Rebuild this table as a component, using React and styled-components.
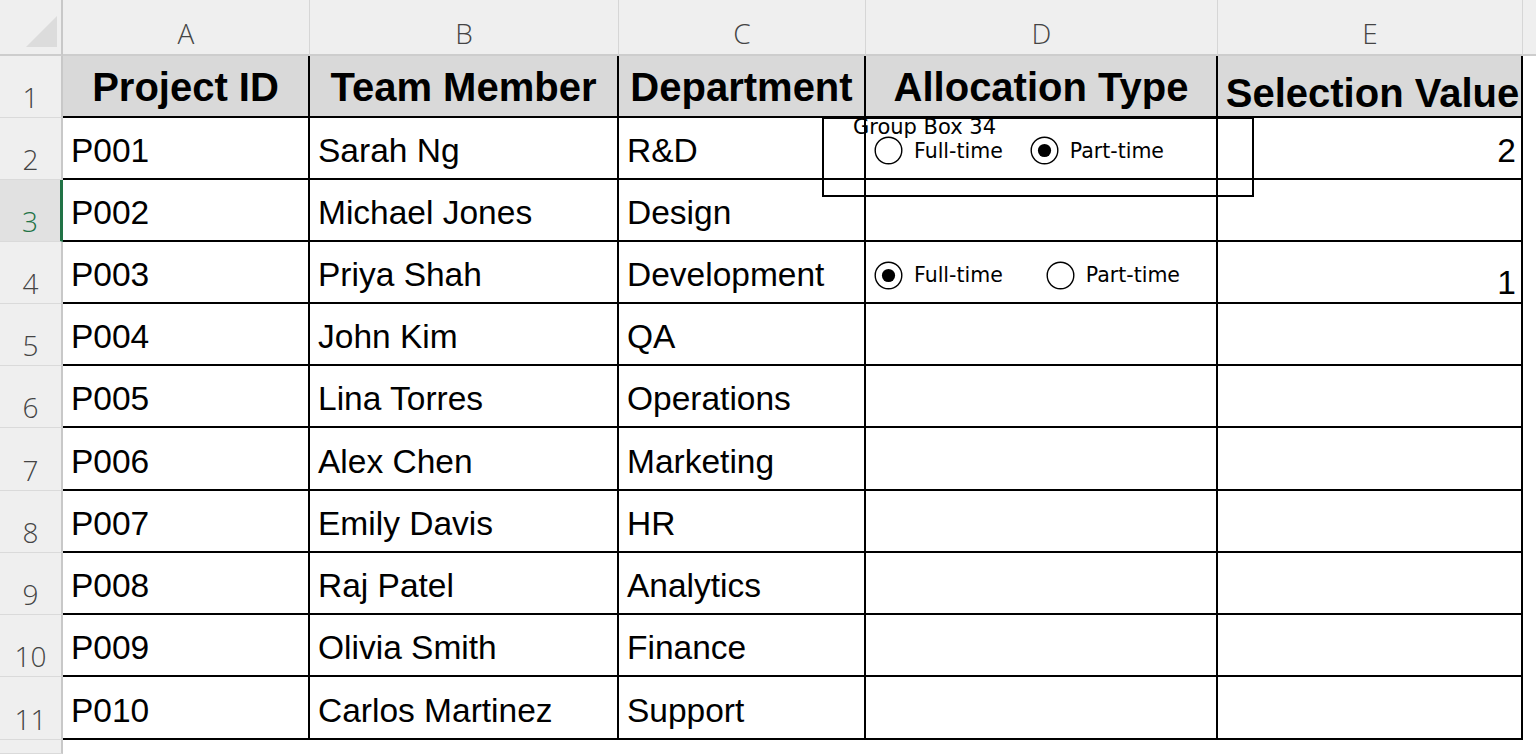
import React, { Fragment } from "react";
import styled, { createGlobalStyle } from "styled-components";

const GlobalStyle = createGlobalStyle`
  html, body { margin: 0; padding: 0; background: #fff; overflow: hidden; }
  #root { width: 1536px; height: 754px; }
`;

const Sheet = styled.div`
  position: relative;
  display: grid;
  grid-template-columns: 63px 247px 309px 247px 352px 305px 1fr;
  grid-template-rows: 56px repeat(6, 62px) 63px repeat(3, 62px) 63px 1fr;
  width: 1536px;
  height: 754px;
  font-family: "Liberation Sans", Arial, sans-serif;
  color: #000;
`;

const Corner = styled.div`
  box-sizing: border-box;
  background: #efefef;
  border-right: 2px solid #c8c8c8;
  border-bottom: 2px solid #cdcdcd;
  display: flex;
  justify-content: flex-end;
  align-items: flex-end;
  padding: 0 4px 7px 0;
`;

const ColHead = styled.div`
  box-sizing: border-box;
  background: #efefef;
  border-bottom: 2px solid #cdcdcd;
  border-right: ${(p) => (p.$blank ? "none" : "1px solid #d6d6d6")};
  display: flex;
  justify-content: center;
  align-items: flex-end;
  padding-bottom: 2px;
  font-family: "Open Sans", "DejaVu Sans", sans-serif;
  font-weight: 300;
  font-size: 28px;
  color: #444;
`;

const RowHead = styled.div`
  box-sizing: border-box;
  background: ${(p) => (p.$selected ? "#e1e1e1" : "#efefef")};
  border-right: ${(p) => (p.$selected ? "3px solid #217346" : "2px solid #c8c8c8")};
  border-bottom: 1px solid #dadada;
  display: flex;
  justify-content: center;
  align-items: flex-end;
  padding-bottom: 1px;
  font-family: "Open Sans", "DejaVu Sans", sans-serif;
  font-weight: 300;
  font-size: 28px;
  color: ${(p) => (p.$selected ? "#217346" : "#444")};
`;

const HeadCell = styled.div`
  box-sizing: border-box;
  background: #d9d9d9;
  border-right: 2px solid #000;
  border-bottom: 2px solid #000;
  display: flex;
  justify-content: center;
  align-items: flex-end;
  padding-bottom: ${(p) => (p.$low ? "0px" : "6px")};
  padding-left: ${(p) => (p.$low ? "6px" : "0px")};
  font-weight: 700;
  font-size: 40px;
  white-space: nowrap;
  overflow: hidden;
`;

const Cell = styled.div`
  box-sizing: border-box;
  border-right: 2px solid #000;
  border-bottom: 2px solid #000;
  display: flex;
  justify-content: ${(p) => (p.$align === "right" ? "flex-end" : "flex-start")};
  align-items: flex-end;
  padding: 0 5px ${(p) => (p.$low ? "0px" : "8px")} 8px;
  font-size: 33.5px;
  white-space: nowrap;
`;

const ControlCell = styled.div`
  box-sizing: border-box;
  border-right: 2px solid #000;
  border-bottom: 2px solid #000;
  display: flex;
  align-items: center;
  padding: 6px 0 0 8px;
`;

const Blank = styled.div``;

const GroupBox = styled.div`
  position: absolute;
  left: 822px;
  top: 117px;
  width: 432px;
  height: 80px;
  box-sizing: border-box;
  border: 2px solid #000;
  display: flex;
  flex-direction: column;
  pointer-events: none;
`;

const GroupLabel = styled.div`
  margin: -2px 0 0 29px;
  font-family: "DejaVu Sans", sans-serif;
  font-size: 21px;
  line-height: 21px;
  white-space: nowrap;
`;

const RadioRow = styled.div`
  display: flex;
  align-items: center;
  gap: ${(p) => p.$gap}px;
  margin: ${(p) => (p.$inBox ? "-2px 0 0 50px" : "0")};
`;

const RadioItem = styled.div`
  display: flex;
  align-items: center;
  gap: 11px;
  font-family: "DejaVu Sans", sans-serif;
  font-size: 20.5px;
  white-space: nowrap;
`;

const Radio = ({ checked, label }) => (
  <RadioItem>
    <svg width="29" height="29" viewBox="0 0 29 29">
      <circle cx="14.5" cy="14.5" r="13.3" fill="#fff" stroke="#000" strokeWidth="1.4" />
      {checked && <circle cx="14.5" cy="14.5" r="6.6" fill="#000" />}
    </svg>
    <span>{label}</span>
  </RadioItem>
);

const headers = ["Project ID", "Team Member", "Department", "Allocation Type", "Selection Value"];

const rows = [
  { id: "P001", name: "Sarah Ng", dept: "R&D", value: "2" },
  { id: "P002", name: "Michael Jones", dept: "Design" },
  { id: "P003", name: "Priya Shah", dept: "Development", value: "1", radios: true, low: true },
  { id: "P004", name: "John Kim", dept: "QA" },
  { id: "P005", name: "Lina Torres", dept: "Operations" },
  { id: "P006", name: "Alex Chen", dept: "Marketing" },
  { id: "P007", name: "Emily Davis", dept: "HR" },
  { id: "P008", name: "Raj Patel", dept: "Analytics" },
  { id: "P009", name: "Olivia Smith", dept: "Finance" },
  { id: "P010", name: "Carlos Martinez", dept: "Support" },
];

export default function App() {
  return (
    <>
      <GlobalStyle />
      <Sheet>
        <Corner>
          <svg width="31" height="31" viewBox="0 0 31 31">
            <polygon points="31,0 31,31 0,31" fill="#dcdcdc" />
          </svg>
        </Corner>
        {["A", "B", "C", "D", "E"].map((c) => (
          <ColHead key={c}>{c}</ColHead>
        ))}
        <ColHead $blank />

        <RowHead>1</RowHead>
        {headers.map((h, i) => (
          <HeadCell key={h} $low={i === 4}>
            {h}
          </HeadCell>
        ))}
        <Blank />

        {rows.map((r, idx) => (
          <Fragment key={r.id}>
            <RowHead $selected={idx === 1}>{idx + 2}</RowHead>
            <Cell>{r.id}</Cell>
            <Cell>{r.name}</Cell>
            <Cell>{r.dept}</Cell>
            {r.radios ? (
              <ControlCell>
                <RadioRow $gap={43}>
                  <Radio checked label="Full-time" />
                  <Radio label="Part-time" />
                </RadioRow>
              </ControlCell>
            ) : (
              <Cell />
            )}
            <Cell $align="right" $low={r.low}>
              {r.value}
            </Cell>
            <Blank />
          </Fragment>
        ))}

        <RowHead />

        <GroupBox>
          <GroupLabel>Group Box 34</GroupLabel>
          <RadioRow $gap={27} $inBox>
            <Radio label="Full-time" />
            <Radio checked label="Part-time" />
          </RadioRow>
        </GroupBox>
      </Sheet>
    </>
  );
}
